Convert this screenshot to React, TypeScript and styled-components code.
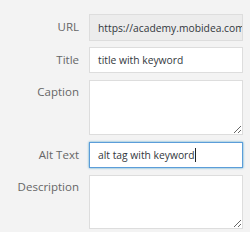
import styled, { createGlobalStyle } from 'styled-components';

const Global = createGlobalStyle`
  html, body {
    margin: 0;
    background: #f3f3f3;
  }
  body {
    font-family: "Open Sans", "Noto Sans", sans-serif;
  }
`;

const Panel = styled.div`
  display: grid;
  grid-template-columns: 79px 154px;
  column-gap: 10px;
  row-gap: 3px;
  padding: 14px 0 0 0;
  width: 250px;
  height: 232px;
  box-sizing: border-box;
  background: #f3f3f3;
`;

const Label = styled.label`
  font-size: 11.5px;
  color: #666;
  text-align: right;
  line-height: 26px;
  align-self: start;
`;

const Field = styled.div<{ $readonly?: boolean; $focus?: boolean }>`
  box-sizing: border-box;
  height: 26px;
  display: flex;
  align-items: center;
  padding: 0 8px;
  font-size: 10.3px;
  color: #32373c;
  white-space: nowrap;
  overflow: hidden;
  background: ${p => (p.$readonly ? '#ececec' : '#fff')};
  border: 1px solid ${p => (p.$focus ? '#5b9dd9' : '#ddd')};
  box-shadow: ${p => (p.$focus ? '0 0 2px rgba(30,140,190,.8)' : 'none')};
`;

const Caret = styled.span`
  display: inline-block;
  width: 1px;
  height: 14px;
  background: #222;
`;

const Area = styled.textarea<{ $h: number }>`
  box-sizing: border-box;
  width: 154px;
  height: ${p => p.$h}px;
  margin: 1px 0 0;
  padding: 4px 8px;
  background: #fff;
  border: 1px solid #ddd;
  resize: vertical;
  outline: none;
  font-family: inherit;
  font-size: 10.3px;
  display: block;
`;

export default function App() {
  return (
    <>
      <Global />
      <Panel>
        <Label>URL</Label>
        <Field $readonly style={{ height: 27 }}>https://academy.mobidea.com/</Field>

        <Label>Title</Label>
        <Field>title with keyword</Field>

        <Label>Caption</Label>
        <Area $h={55} readOnly />

        <Label>Alt Text</Label>
        <Field $focus>
          alt tag with keyword
          <Caret />
        </Field>

        <Label>Description</Label>
        <Area $h={54} readOnly />
      </Panel>
    </>
  );
}
